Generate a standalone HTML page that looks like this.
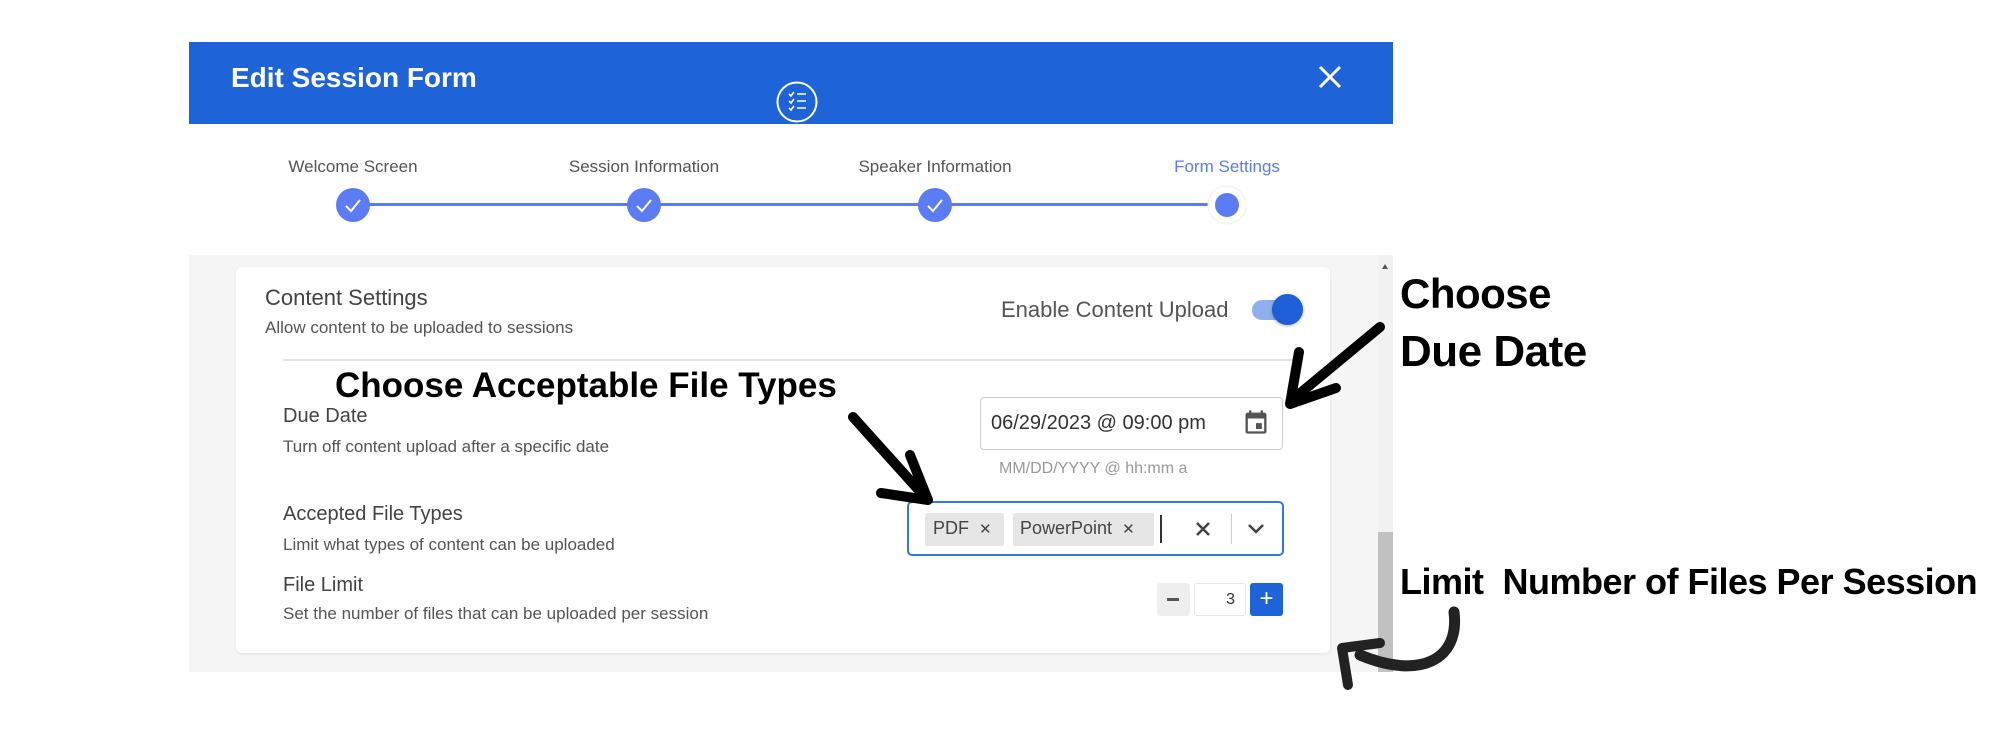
<!DOCTYPE html>
<html><head><meta charset="utf-8"><style>
*{margin:0;padding:0;box-sizing:border-box}
body{width:2000px;height:750px;background:#fff;position:relative;overflow:hidden;font-family:"Liberation Sans",sans-serif}
.a{position:absolute;white-space:nowrap}
.lbl{font-size:17px;color:#555;transform:translateX(-50%)}
.h{font-size:20px;color:#444}
.s{font-size:17px;color:#555}
.big{font-weight:bold;color:#000;letter-spacing:-0.5px}
</style></head><body>
<div class="a" style="left:189px;top:42px;width:1204px;height:82px;background:#1f63d8"></div>
<div class="a" style="left:231px;top:62px;font-size:28px;font-weight:bold;color:#fff">Edit Session Form</div>
<svg class="a" style="left:1316px;top:63px" width="28" height="28" viewBox="0 0 28 28"><path d="M4 4L24 24M24 4L4 24" stroke="#fff" stroke-width="3"/></svg>
<svg class="a" style="left:776px;top:81px" width="42" height="42" viewBox="0 0 42 42"><circle cx="21" cy="21" r="19.5" fill="#1f63d8" stroke="#fff" stroke-width="2"/><path d="M13 13l2 2 3-4M13 20l2 2 3-4M13 27l2 2 3-4M21 13h9M21 20h9M21 27h9" stroke="#fff" stroke-width="1.6" fill="none"/></svg>

<div class="a lbl" style="left:353px;top:157px">Welcome Screen</div>
<div class="a lbl" style="left:644px;top:157px">Session Information</div>
<div class="a lbl" style="left:935px;top:157px">Speaker Information</div>
<div class="a lbl" style="left:1227px;top:157px;color:#5b7cf5">Form Settings</div>
<div class="a" style="left:353px;top:203px;width:874px;height:3px;background:#5b7cf5"></div>
<svg class="a" style="left:336px;top:188px" width="34" height="34"><circle cx="17" cy="17" r="17" fill="#5b7cf5"/><path d="M10 18l5 5 9-11" stroke="#fff" stroke-width="2" fill="none"/></svg>
<svg class="a" style="left:627px;top:188px" width="34" height="34"><circle cx="17" cy="17" r="17" fill="#5b7cf5"/><path d="M10 18l5 5 9-11" stroke="#fff" stroke-width="2" fill="none"/></svg>
<svg class="a" style="left:918px;top:188px" width="34" height="34"><circle cx="17" cy="17" r="17" fill="#5b7cf5"/><path d="M10 18l5 5 9-11" stroke="#fff" stroke-width="2" fill="none"/></svg>
<svg class="a" style="left:1207px;top:185px" width="40" height="40"><circle cx="20" cy="20" r="19" fill="#fff" stroke="#eee" stroke-width="1"/><circle cx="20" cy="20" r="12" fill="#5b7cf5"/></svg>

<div class="a" style="left:189px;top:255px;width:1204px;height:417px;background:#f5f5f5"></div>
<div class="a" style="left:1378px;top:255px;width:15px;height:417px;background:#f1f1f1"></div>
<div class="a" style="left:1378px;top:532px;width:15px;height:140px;background:#c1c1c1"></div>
<div class="a" style="left:1382px;top:264px;border-left:3.5px solid transparent;border-right:3.5px solid transparent;border-bottom:5px solid #555"></div>
<div class="a" style="left:236px;top:267px;width:1094px;height:386px;background:#fff;border-radius:6px;box-shadow:0 1px 3px rgba(0,0,0,.08)"></div>

<div class="a" style="left:265px;top:285px;font-size:22px;color:#444">Content Settings</div>
<div class="a s" style="left:265px;top:318px">Allow content to be uploaded to sessions</div>
<div class="a" style="left:1001px;top:297px;font-size:22px;color:#555">Enable Content Upload</div>
<div class="a" style="left:1252px;top:300px;width:46px;height:20px;border-radius:10px;background:#8fb0ee"></div>
<div class="a" style="left:1272px;top:294px;width:31px;height:31px;border-radius:50%;background:#1e5fd8;box-shadow:0 1px 3px rgba(0,0,0,.3)"></div>
<div class="a" style="left:283px;top:359px;width:1018px;height:2px;background:#e4e4e4"></div>

<div class="a big" style="left:335px;top:366px;font-size:35px;letter-spacing:0">Choose Acceptable File Types</div>

<div class="a h" style="left:283px;top:405px">Due Date</div>
<div class="a s" style="left:283px;top:437px">Turn off content upload after a specific date</div>
<div class="a" style="left:980px;top:397px;width:303px;height:53px;border:1px solid #ccc;border-radius:4px"></div>
<div class="a" style="left:991px;top:412px;font-size:20px;color:#333">06/29/2023 @ 09:00 pm</div>
<svg class="a" style="left:1242px;top:407px" width="28" height="30" viewBox="0 0 24 24"><path d="M19 4h-1V2h-2v2H8V2H6v2H5c-1.1 0-2 .9-2 2v14c0 1.1.9 2 2 2h14c1.1 0 2-.9 2-2V6c0-1.1-.9-2-2-2zm0 16H5V9h14v11zM12 13h5v5h-5z" fill="#555"/></svg>
<div class="a" style="left:999px;top:460px;font-size:16px;color:#999">MM/DD/YYYY @ hh:mm a</div>

<div class="a h" style="left:283px;top:503px">Accepted File Types</div>
<div class="a s" style="left:283px;top:535px">Limit what types of content can be uploaded</div>
<div class="a" style="left:907px;top:501px;width:377px;height:55px;border:2px solid #2f7ae8;border-radius:5px"></div>
<div class="a" style="left:925px;top:513px;width:79px;height:33px;background:#e6e6e6;border-radius:2px"></div>
<div class="a" style="left:933px;top:518px;font-size:18px;color:#444">PDF&nbsp;&nbsp;<span style="font-size:15px">✕</span></div>
<div class="a" style="left:1013px;top:513px;width:141px;height:33px;background:#e6e6e6;border-radius:2px"></div>
<div class="a" style="left:1020px;top:518px;font-size:18px;color:#444">PowerPoint&nbsp;&nbsp;<span style="font-size:15px">✕</span></div>
<div class="a" style="left:1160px;top:515px;width:2px;height:28px;background:#333"></div>
<svg class="a" style="left:1194px;top:520px" width="18" height="18"><path d="M3 3L15 15M15 3L3 15" stroke="#444" stroke-width="2.5"/></svg>
<div class="a" style="left:1231px;top:514px;width:1px;height:30px;background:#ccc"></div>
<svg class="a" style="left:1247px;top:522px" width="18" height="14"><path d="M2 3l7 7 7-7" stroke="#444" stroke-width="2.5" fill="none"/></svg>

<div class="a h" style="left:283px;top:574px">File Limit</div>
<div class="a s" style="left:283px;top:604px">Set the number of files that can be uploaded per session</div>
<div class="a" style="left:1157px;top:583px;width:33px;height:33px;background:#eee;border-radius:3px"></div>
<div class="a" style="left:1167px;top:598px;width:12px;height:3px;background:#555"></div>
<div class="a" style="left:1194px;top:583px;width:52px;height:33px;border:1px solid #e6e6e6;border-radius:3px;text-align:right;padding-right:10px;font-size:16px;line-height:31px;color:#333">3</div>
<div class="a" style="left:1250px;top:583px;width:33px;height:33px;background:#1f63d8;border-radius:3px;color:#fff;font-size:24px;line-height:32px;text-align:center">+</div>

<div class="a big" style="left:1400px;top:270px;font-size:42px">Choose</div>
<div class="a big" style="left:1400px;top:327px;font-size:44px">Due Date</div>
<div class="a big" style="left:1400px;top:561px;font-size:36px">Limit&nbsp; Number of Files Per Session</div>

<svg class="a" style="left:0;top:0" width="2000" height="750">
<path d="M1380 327L1292 400" stroke="#000" stroke-width="10" stroke-linecap="round"/>
<path d="M1299 352L1290 404L1336 388" stroke="#000" stroke-width="10" fill="none" stroke-linecap="round" stroke-linejoin="round"/>
<path d="M853 417L925 497" stroke="#000" stroke-width="10" stroke-linecap="round"/>
<path d="M881 493L928 500L910 455" stroke="#000" stroke-width="10" fill="none" stroke-linecap="round" stroke-linejoin="round"/>
<path d="M1454 612C1460 660 1420 680 1360 655" stroke="#222" stroke-width="11" fill="none" stroke-linecap="round"/>
<path d="M1380 643L1342 648L1348 685" stroke="#222" stroke-width="10" fill="none" stroke-linecap="round" stroke-linejoin="round"/>
</svg>
</body></html>
